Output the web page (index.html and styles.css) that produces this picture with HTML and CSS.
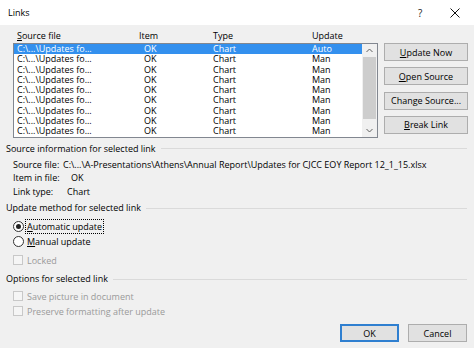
FILE: index.html
```html
<!DOCTYPE html>
<html lang="en">
<head>
  <meta charset="UTF-8">
  <title>Links</title>
  <link rel="stylesheet" href="styles.css">
</head>
<body>
  <div class="dialog">
    <div class="titlebar">
      <span class="title">Links</span>
      <span class="help">?</span>
      <span class="close">
        <svg width="10" height="10" viewBox="0 0 10 10"><path d="M0.5 0.5 L9.5 9.5 M9.5 0.5 L0.5 9.5" stroke="#111" stroke-width="1" fill="none"/></svg>
      </span>
    </div>

    <div class="content">
      <div class="col-header">
        <span><u>S</u>ource file</span>
        <span>Item</span>
        <span>Type</span>
        <span>Update</span>
      </div>

      <div class="top-area">
        <div class="listbox">
          <div class="rows">
            <div class="row selected"><span>C:\...\Updates fo...</span><span class="ok">OK</span><span>Chart</span><span>Auto</span></div>
            <div class="row"><span>C:\...\Updates fo...</span><span class="ok">OK</span><span>Chart</span><span>Man</span></div>
            <div class="row"><span>C:\...\Updates fo...</span><span class="ok">OK</span><span>Chart</span><span>Man</span></div>
            <div class="row"><span>C:\...\Updates fo...</span><span class="ok">OK</span><span>Chart</span><span>Man</span></div>
            <div class="row"><span>C:\...\Updates fo...</span><span class="ok">OK</span><span>Chart</span><span>Man</span></div>
            <div class="row"><span>C:\...\Updates fo...</span><span class="ok">OK</span><span>Chart</span><span>Man</span></div>
            <div class="row"><span>C:\...\Updates fo...</span><span class="ok">OK</span><span>Chart</span><span>Man</span></div>
            <div class="row"><span>C:\...\Updates fo...</span><span class="ok">OK</span><span>Chart</span><span>Man</span></div>
            <div class="row"><span>C:\...\Updates fo...</span><span class="ok">OK</span><span>Chart</span><span>Man</span></div>
          </div>
          <div class="scrollbar">
            <div class="arrow">
              <svg width="7" height="5" viewBox="0 0 7 5"><path d="M0.5 4 L3.5 1 L6.5 4" stroke="#606060" fill="none"/></svg>
            </div>
            <div class="track"><div class="thumb"></div></div>
            <div class="arrow">
              <svg width="7" height="5" viewBox="0 0 7 5"><path d="M0.5 1 L3.5 4 L6.5 1" stroke="#606060" fill="none"/></svg>
            </div>
          </div>
        </div>

        <div class="side-buttons">
          <button class="btn"><u>U</u>pdate Now</button>
          <button class="btn"><u>O</u>pen Source</button>
          <button class="btn">Chan<u>g</u>e Source...</button>
          <button class="btn"><u>B</u>reak Link</button>
        </div>
      </div>

      <div class="group-title first"><span>Source information for selected link</span><div class="rule"></div></div>
      <div class="info">
        <div class="info-row"><span class="label">Source file:</span><span class="value">C:\...\A-Presentations\Athens\Annual Report\Updates for CJCC EOY Report 12_1_15.xlsx</span></div>
        <div class="info-row"><span class="label">Item in file:</span><span class="value v-ok">OK</span></div>
        <div class="info-row"><span class="label">Link type:</span><span class="value v-type">Chart</span></div>
      </div>

      <div class="group-title second"><span>Update method for selected link</span><div class="rule"></div></div>
      <div class="options">
        <div class="option first-radio"><span class="radio checked"></span><span class="opt-label focused"><u>A</u>utomatic update</span></div>
        <div class="option"><span class="radio"></span><span class="opt-label"><u>M</u>anual update</span></div>
        <div class="option disabled locked"><span class="check"></span><span class="opt-label">Locked</span></div>
      </div>

      <div class="group-title third"><span>Options for selected link</span><div class="rule"></div></div>
      <div class="options">
        <div class="option disabled first-check"><span class="check"></span><span class="opt-label">Save picture in document</span></div>
        <div class="option disabled"><span class="check"></span><span class="opt-label">Preserve formatting after update</span></div>
      </div>

      <div class="footer">
        <button class="btn default">OK</button>
        <button class="btn">Cancel</button>
      </div>
    </div>
  </div>
</body>
</html>
```

FILE: styles.css
```css
/* Links dialog */
html, body {
  margin: 0;
  padding: 0;
}

body {
  width: 474px;
  height: 348px;
  overflow: hidden;
  background-color: #f0f0f0;
  font-family: "Open Sans", "Noto Sans", sans-serif;
  font-size: 9px;
  color: #000;
}

u {
  text-decoration-thickness: 1px;
  text-underline-offset: 1px;
}

.titlebar {
  height: 25px;
  background-color: #fff;
  display: flex;
  align-items: center;
  padding-left: 8px;
}

.title {
  font-size: 9px;
}

.help {
  margin-left: auto;
  width: 32px;
  font-size: 10px;
  color: #222;
}

.close {
  width: 24px;
  display: flex;
  align-items: center;
}

.content {
  padding: 0 7px 0 6px;
}

.col-header {
  display: grid;
  grid-template-columns: 122px 74px 99px auto;
  padding-left: 11px;
  margin-top: 5px;
  line-height: 12px;
}

.top-area {
  display: flex;
  margin-top: 1px;
}

.listbox {
  display: flex;
  box-sizing: border-box;
  width: 365px;
  margin-left: 7px;
  border: 1px solid #828790;
  background-color: #fff;
}

.rows {
  width: 348px;
}

.row {
  display: grid;
  grid-template-columns: 122px 74px 99px auto;
  padding-left: 3px;
  height: 10.3px;
  line-height: 10.3px;
  white-space: nowrap;
}

.row .ok {
  padding-left: 5px;
}

.row.selected {
  background-color: #3390ee;
  color: #fff;
}

.scrollbar {
  width: 15px;
  display: flex;
  flex-direction: column;
  background-color: #f0f0f0;
}

.arrow {
  height: 13px;
  display: flex;
  align-items: center;
  justify-content: center;
}

.track {
  flex: 1;
  padding: 0 1px;
}

.thumb {
  height: 62px;
  background-color: #cdcdcd;
}

.side-buttons {
  display: flex;
  flex-direction: column;
  gap: 6.3px;
  margin-left: 6px;
}

.btn {
  box-sizing: border-box;
  width: 84px;
  height: 18px;
  padding: 0;
  background-color: #e1e1e1;
  border: 1px solid #adadad;
  font-family: inherit;
  font-size: 9px;
  color: #000;
}

.group-title {
  display: flex;
  align-items: center;
  line-height: 12px;
}

.group-title .rule {
  flex: 1;
  height: 1px;
  margin-left: 5px;
  background-color: #dadada;
}

.group-title.first {
  margin-top: 5px;
}

.group-title.second {
  margin-top: 4px;
}

.group-title.third {
  margin-top: 5.5px;
}

.info {
  margin-top: 3px;
  padding-left: 7px;
}

.info-row {
  display: flex;
  line-height: 13.5px;
  white-space: nowrap;
}

.info-row .label {
  width: 50px;
}

.info-row .v-ok {
  padding-left: 8px;
}

.info-row .v-type {
  padding-left: 4px;
}

.options {
  padding-left: 7px;
}

.option {
  display: flex;
  align-items: center;
  height: 15px;
}

.first-radio {
  margin-top: 4.5px;
}

.locked {
  margin-top: 4px;
}

.first-check {
  margin-top: 3.5px;
}

.radio {
  box-sizing: border-box;
  width: 11px;
  height: 11px;
  border: 1px solid #333;
  border-radius: 50%;
  background-color: #fff;
  display: flex;
  align-items: center;
  justify-content: center;
}

.radio.checked::after {
  content: "";
  width: 5px;
  height: 5px;
  border-radius: 50%;
  background-color: #222;
}

.check {
  box-sizing: border-box;
  width: 10px;
  height: 10px;
  border: 1px solid #c8c8c8;
  background-color: #f5f5f5;
}

.opt-label {
  border: 1px solid transparent;
  padding: 0 1px;
  margin-left: 1px;
  line-height: 13px;
}

.option .check + .opt-label {
  margin-left: 2px;
}

.opt-label.focused {
  border: 1px dotted #000;
}

.option.disabled {
  color: #9a9a9a;
}

.footer {
  display: flex;
  justify-content: flex-end;
  gap: 9px;
  margin-top: 5.5px;
}

.footer .btn {
  width: 59px;
}

.footer .btn.default {
  border: 2px solid #2f7fd0;
}
```
